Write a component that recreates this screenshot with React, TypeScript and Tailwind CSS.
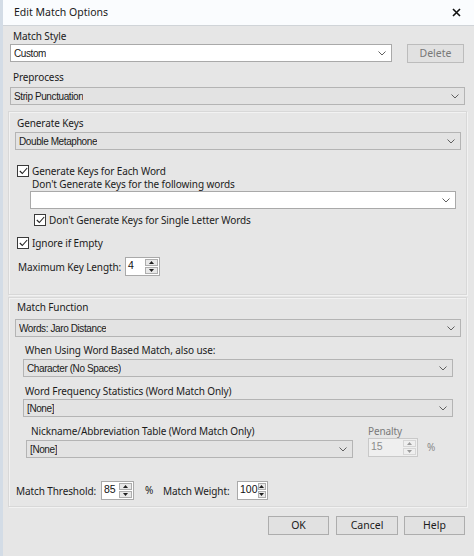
import React from 'react';

const labelFont = "font-['Noto_Sans','Open_Sans',sans-serif] text-[10px] tracking-[-0.1px]";
const comboFont = "font-['Liberation_Sans','Arial',sans-serif] text-[10px] tracking-[-0.4px]";

const Chevron: React.FC<{ color?: string }> = ({ color = '#5f5f5f' }) => (
  <svg width="8" height="5" viewBox="0 0 8 5" className="shrink-0">
    <path d="M0.5 0.5 L4 4 L7.5 0.5" fill="none" stroke={color} strokeWidth="1" />
  </svg>
);

const Combo: React.FC<{ text?: string; width: number; white?: boolean; className?: string }> = ({
  text = '',
  width,
  white,
  className = '',
}) => (
  <div
    style={{ width }}
    className={`h-[18px] flex items-center justify-between pl-[3px] pr-[5px] border ${
      white ? 'bg-white border-[#a9a9a9]' : 'bg-[#e3e3e3] border-[#b4b4b4]'
    } ${comboFont} text-[#1a1a1a] ${className}`}
  >
    <span className="truncate">{text}</span>
    <Chevron />
  </div>
);

const Label: React.FC<{ children: React.ReactNode; className?: string }> = ({ children, className = '' }) => (
  <div className={`h-[14px] leading-[14px] ${labelFont} text-[#1b1b1b] whitespace-nowrap ${className}`}>
    {children}
  </div>
);

const Check: React.FC<{ label: string; className?: string }> = ({ label, className = '' }) => (
  <div className={`flex items-center h-[14px] ${className}`}>
    <div className="w-[12px] h-[12px] border border-[#3a3a3a] bg-white flex items-center justify-center">
      <svg width="9" height="8" viewBox="0 0 9 8">
        <path d="M0.8 4 L3.3 6.5 L8.2 1" fill="none" stroke="#222" strokeWidth="1.1" />
      </svg>
    </div>
    <span className={`ml-[3px] ${labelFont} text-[#1b1b1b] whitespace-nowrap`}>{label}</span>
  </div>
);

const Spin: React.FC<{ value: string; width: number; disabled?: boolean; className?: string }> = ({
  value,
  width,
  disabled,
  className = '',
}) => {
  const tri = disabled ? '#9a9a9a' : '#1e1e1e';
  const btn = disabled ? 'border-[#d6d6d6] bg-[#efefef]' : 'border-[#adadad] bg-[#e8e8e8]';
  return (
    <div
      style={{ width }}
      className={`h-[19px] shrink-0 flex border ${
        disabled ? 'bg-[#efefef] border-[#c9c9c9]' : 'bg-white border-[#a9a9a9]'
      } ${className}`}
    >
      <span
        className={`flex-1 pl-[2px] leading-[14px] font-['Liberation_Sans','Arial',sans-serif] text-[10.5px] ${
          disabled ? 'text-[#8c8c8c]' : 'text-[#111]'
        }`}
      >
        {value}
      </span>
      <div className="w-[13px] my-[1px] mr-[1px] flex flex-col gap-[1px]">
        <div className={`flex-1 flex items-center justify-center border ${btn}`}>
          <svg width="5" height="3" viewBox="0 0 5 3">
            <path d="M0 3 L2.5 0 L5 3 Z" fill={tri} />
          </svg>
        </div>
        <div className={`flex-1 flex items-center justify-center border ${btn}`}>
          <svg width="5" height="3" viewBox="0 0 5 3">
            <path d="M0 0 L2.5 3 L5 0 Z" fill={tri} />
          </svg>
        </div>
      </div>
    </div>
  );
};

const Button: React.FC<{ label: string; width: number; disabled?: boolean; className?: string }> = ({
  label,
  width,
  disabled,
  className = '',
}) => (
  <div
    style={{ width }}
    className={`h-[19px] flex items-center justify-center border ${
      disabled ? 'border-[#bcbcbc] text-[#787878]' : 'border-[#adadad] text-[#1b1b1b]'
    } bg-[#e1e1e1] font-['Noto_Sans','Open_Sans',sans-serif] text-[10.5px] ${className}`}
  >
    {label}
  </div>
);

const Panel: React.FC<{ children: React.ReactNode; height: number; className?: string }> = ({
  children,
  height,
  className = '',
}) => (
  <div
    style={{ height }}
    className={`w-[459px] ml-[5px] border border-[#d8d8d8] shadow-[inset_1px_1px_0_#f2f2f2,1px_1px_0_#f2f2f2] flex flex-col ${className}`}
  >
    {children}
  </div>
);

const App: React.FC = () => {
  return (
    <div className="w-[474px] h-[556px] flex bg-[#dde3ea] overflow-hidden">
      <div className="w-[3px] bg-[#d3dce6]" />
      <div className="flex-1 flex flex-col bg-[#e6e6e6]">
        {/* Title bar */}
        <div className="h-[26px] shrink-0 bg-[#fafcfe] border-b border-[#d0d4d8] flex items-center justify-between pl-[11px] pr-[13px]">
          <span className="font-['Noto_Sans','Open_Sans',sans-serif] text-[10.5px] text-[#1a1a1a]">Edit Match Options</span>
          <svg width="9" height="9" viewBox="0 0 9 9">
            <path d="M1 1 L8 8 M8 1 L1 8" stroke="#111" strokeWidth="1.6" />
          </svg>
        </div>

        <Label className="mt-[3px] ml-[10px]">Match Style</Label>
        <div className="mt-[1px] flex items-start">
          <Combo text="Custom" width={382} white className="ml-[7px]" />
          <Button label="Delete" width={57} disabled className="ml-[15px] h-[17px]" />
        </div>

        <Label className="mt-[7px] ml-[10px]">Preprocess</Label>
        <Combo text="Strip Punctuation" width={455} className="mt-[3px] ml-[7px]" />

        {/* Generate keys group */}
        <Panel height={184} className="mt-[6px]">
          <Label className="mt-[4px] ml-[8px]">Generate Keys</Label>
          <Combo text="Double Metaphone" width={446} className="mt-[2px] ml-[6px]" />
          <Check label="Generate Keys for Each Word" className="mt-[14px] ml-[8px]" />
          <Label className="mt-[-1px] ml-[23px]">Don't Generate Keys for the following words</Label>
          <Combo width={426} white className="mt-[0px] ml-[21px]" />
          <Check label="Don't Generate Keys for Single Letter Words" className="mt-[4px] ml-[25px]" />
          <Check label="Ignore if Empty" className="mt-[9px] ml-[8px]" />
          <div className="mt-[7px] ml-[9px] flex items-center">
            <Label className="w-[107px]">Maximum Key Length:</Label>
            <Spin value="4" width={35} />
          </div>
        </Panel>

        {/* Match function group */}
        <Panel height={210} className="mt-[2px]">
          <Label className="mt-[2px] ml-[8px]">Match Function</Label>
          <Combo text="Words: Jaro Distance" width={446} className="mt-[5px] ml-[6px]" />
          <Label className="mt-[6px] ml-[16px]">When Using Word Based Match, also use:</Label>
          <Combo text="Character (No Spaces)" width={430} className="mt-[2px] ml-[14px]" />
          <Label className="mt-[7px] ml-[16px]">Word Frequency Statistics (Word Match Only)</Label>
          <Combo text="[None]" width={430} className="mt-[1px] ml-[14px]" />
          <div className="mt-[7px] flex">
            <div className="flex flex-col">
              <Label className="ml-[22px]">Nickname/Abbreviation Table (Word Match Only)</Label>
              <Combo text="[None]" width={327} className="mt-[2px] ml-[17px]" />
            </div>
            <div className="ml-[15px] flex flex-col">
              <Label className="text-[#7a7a7a]">Penalty</Label>
              <div className="flex items-center">
                <Spin value="15" width={50} disabled />
                <span className={`ml-[9px] ${labelFont} text-[#8a8a8a]`}>%</span>
              </div>
            </div>
          </div>
          <div className="mt-[23px] ml-[7px] flex items-center">
            <Label className="w-[85px]">Match Threshold:</Label>
            <Spin value="85" width={33} />
            <span className={`w-[29px] pl-[11px] ${labelFont} text-[#1b1b1b]`}>%</span>
            <Label className="w-[74px]">Match Weight:</Label>
            <Spin value="100" width={31} />
          </div>
        </Panel>

        <div className="mt-[9px] flex">
          <Button label="OK" width={61} className="ml-[265px]" />
          <Button label="Cancel" width={62} className="ml-[7px]" />
          <Button label="Help" width={61} className="ml-[6px]" />
        </div>
      </div>
    </div>
  );
};

export default App;
